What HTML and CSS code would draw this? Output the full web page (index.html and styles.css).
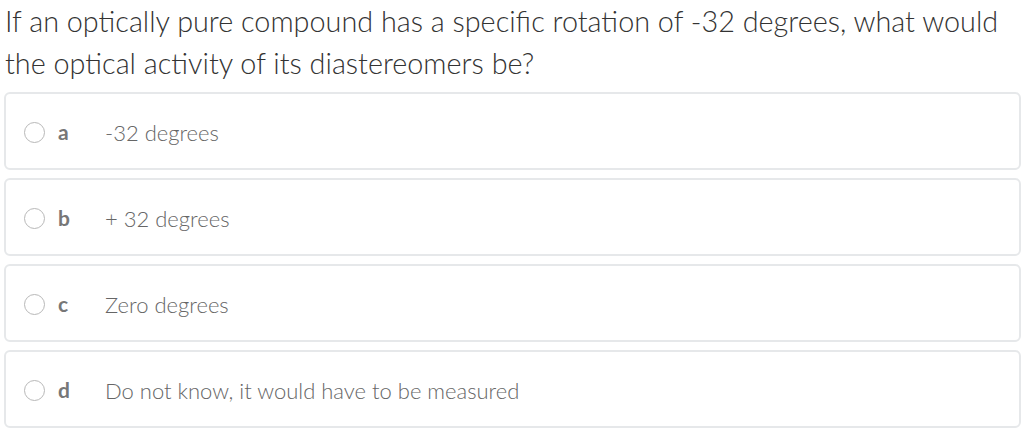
FILE: index.html
```html
<!DOCTYPE html>
<html>
<head>
<meta charset="utf-8">
<link rel="stylesheet" href="styles.css">
</head>
<body>
<div class="quiz">
  <p class="question">If an optically pure compound has a specific rotation of -32 degrees, what would the optical activity of its diastereomers be?</p>
  <div class="options">
    <label class="option"><span class="radio"></span><span class="letter">a</span><span class="text">-32 degrees</span></label>
    <label class="option"><span class="radio"></span><span class="letter">b</span><span class="text">+ 32 degrees</span></label>
    <label class="option"><span class="radio"></span><span class="letter">c</span><span class="text">Zero degrees</span></label>
    <label class="option"><span class="radio"></span><span class="letter">d</span><span class="text">Do not know, it would have to be measured</span></label>
  </div>
</div>
</body>
</html>
```
FILE: styles.css
```css
html, body {
  margin: 0;
  padding: 0;
  background: #fff;
}
body {
  font-family: "Lato", "Open Sans", sans-serif;
}
.quiz {
  width: 1024px;
  padding: 0 3px 0 4px;
  box-sizing: border-box;
}
.question {
  margin: 0;
  padding: 0 0 0 1px;
  font-size: 28.8px;
  font-weight: 300;
  line-height: 42px;
  color: #333;
  height: 92px;
  box-sizing: border-box;
}
.options {
  display: flex;
  flex-direction: column;
  gap: 8px;
}
.option {
  display: flex;
  align-items: center;
  height: 78px;
  box-sizing: border-box;
  border: 2px solid #e6e8ea;
  border-radius: 6px;
  padding-left: 18px;
}
.radio {
  width: 21px;
  height: 21px;
  box-sizing: border-box;
  border: 1px solid #b8b8b8;
  border-radius: 50%;
  margin-top: 3px;
  flex: none;
}
.letter {
  width: 60px;
  padding-left: 13px;
  box-sizing: border-box;
  font-size: 21px;
  font-weight: 700;
  color: #777;
  margin-top: 1px;
  flex: none;
}
.text {
  font-size: 22px;
  font-weight: 300;
  color: #666;
  margin-top: 2px;
}
```
